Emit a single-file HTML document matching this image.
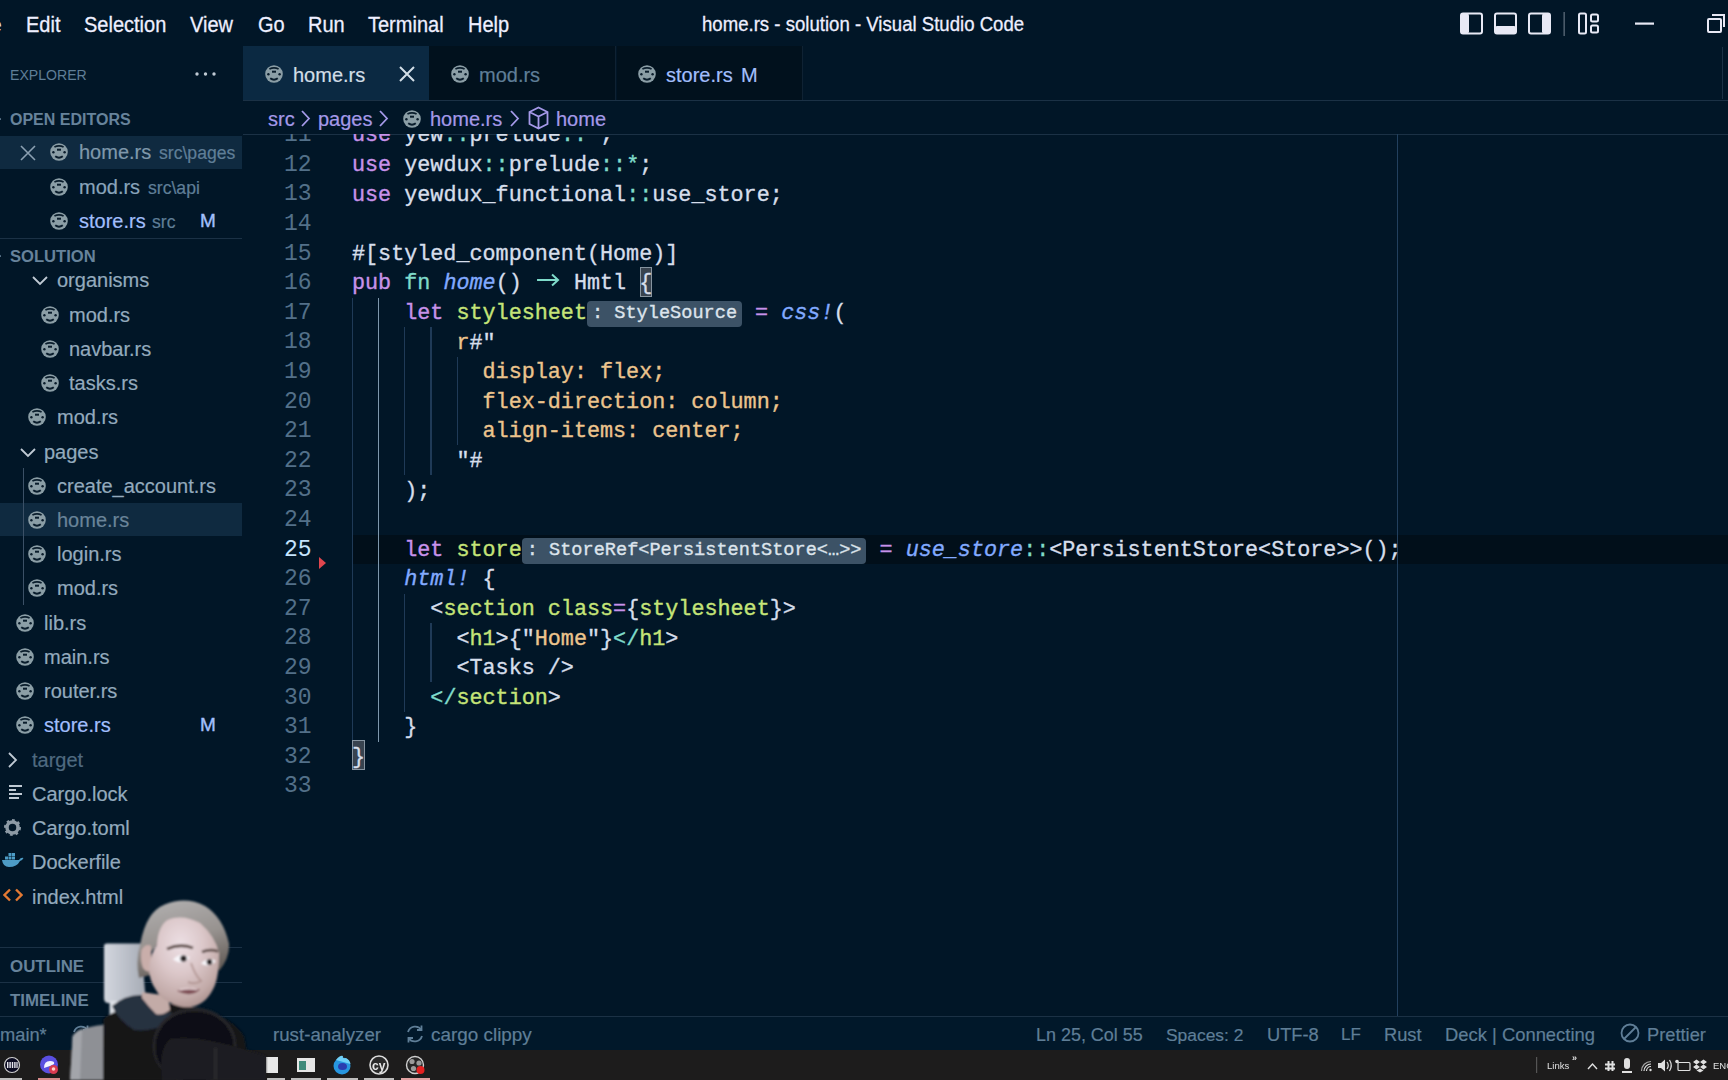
<!DOCTYPE html><html><head><meta charset="utf-8"><style>
*{box-sizing:border-box;margin:0;padding:0}
html,body{width:1728px;height:1080px;overflow:hidden;background:#011627}
body{position:relative;font-family:"Liberation Sans",sans-serif;color:#89a4bb}
.a{position:absolute;white-space:pre}
.menu{font-size:20px;color:#eeefff;line-height:24px;-webkit-text-stroke:0.25px currentColor}
.sb{font-size:20px;line-height:24px;color:#93aabd;-webkit-text-stroke:0.2px currentColor}
.hd{font-size:16px;font-weight:bold;color:#67839b;line-height:20px}
.code{position:absolute;-webkit-text-stroke:0.35px currentColor;left:352.0px;font-family:"Liberation Mono",monospace;font-size:21.767px;line-height:29.6px;color:#d6deeb;white-space:pre}
.ln{position:absolute;left:250px;width:61.5px;font-family:"Liberation Mono",monospace;font-size:23px;line-height:29.6px;color:#4b6479;text-align:right}
.k{color:#c792ea}.v{color:#c5e478}.s{color:#ecc48d}.f{color:#82aaff;font-style:italic}.p{color:#7fdbca}.w{color:#d6deeb}
.hint{display:inline-block;background:#3c5266;color:#dce4ec;border-radius:4px;font-size:18.6px;line-height:26px;padding:0 5px;vertical-align:top;margin-top:2.5px}
.st{font-size:18.3px;line-height:22px;color:#5f7e97;-webkit-text-stroke:0.2px currentColor}
.g{position:absolute;width:1.3px;background:#1f3550}
.ic{position:absolute}
</style></head><body>
<div class="a menu" style="left:-9.5px;top:13px;">e</div>
<div class="a menu" style="left:26px;top:13px;transform:scaleY(1.07);transform-origin:0 19px">Edit</div>
<div class="a menu" style="left:84px;top:13px;transform:scaleY(1.07);transform-origin:0 19px">Selection</div>
<div class="a menu" style="left:190px;top:13px;transform:scaleY(1.07);transform-origin:0 19px">View</div>
<div class="a menu" style="left:258px;top:13px;transform:scaleY(1.07);transform-origin:0 19px">Go</div>
<div class="a menu" style="left:308px;top:13px;transform:scaleY(1.07);transform-origin:0 19px">Run</div>
<div class="a menu" style="left:368px;top:13px;transform:scaleY(1.07);transform-origin:0 19px">Terminal</div>
<div class="a menu" style="left:468px;top:13px;transform:scaleY(1.07);transform-origin:0 19px">Help</div>
<div class="a menu" style="left:702px;top:12.5px;font-size:18.6px;transform:scaleY(1.1);transform-origin:0 19px">home.rs - solution - Visual Studio Code</div>
<svg class="ic" style="left:1455px;top:8px" width="273" height="32" viewBox="1455 8 273 32">
<g fill="none" stroke="#e8e9f5" stroke-width="2">
<rect x="1461" y="13.5" width="21" height="20" rx="2"/>
<rect x="1495" y="13.5" width="21" height="20" rx="2"/>
<rect x="1529" y="13.5" width="21" height="20" rx="2"/>
<rect x="1579" y="13.5" width="7" height="20" rx="1.5"/>
<rect x="1591" y="14.5" width="7" height="7" rx="1.5"/>
<rect x="1591" y="25.5" width="7" height="7" rx="1.5"/>
<rect x="1708" y="19" width="13" height="13" rx="1"/>
<path d="M1712 15 h12 v12"/>
</g>
<g fill="#e8e9f5">
<rect x="1461" y="13.5" width="8" height="20" rx="2"/>
<rect x="1495" y="26" width="21" height="7.5" rx="2"/>
<rect x="1542" y="13.5" width="8" height="20" rx="2"/>
<rect x="1563.5" y="12" width="1.3" height="24" fill="#5d6b7a"/>
<rect x="1635" y="22.5" width="19" height="2.2"/>
</g></svg>
<div class="a" style="left:243px;top:46px;width:186px;height:54px;background:#0b2942"></div>
<div class="a" style="left:429px;top:46px;width:186px;height:54px;background:#01111d"></div>
<div class="a" style="left:615px;top:46px;width:1.3px;height:54px;background:#0f2233"></div>
<div class="a" style="left:616.5px;top:46px;width:185.5px;height:54px;background:#01111d"></div>
<div class="a" style="left:801.5px;top:46px;width:1.3px;height:54px;background:#0f2233"></div>
<div class="a" style="left:243px;top:99.5px;width:1485px;height:1.3px;background:#1b3145"></div>
<div class="a" style="left:1722px;top:47px;width:1.3px;height:52px;background:#1b3145"></div>
<div class="a sb" style="left:293px;top:63px;color:#d2dee7">home.rs</div>
<div class="a sb" style="left:479px;top:63px;color:#5f7e97">mod.rs</div>
<div class="a sb" style="left:666px;top:63px;color:#a2bffc">store.rs</div>
<div class="a sb" style="left:741px;top:63px;color:#a2bffc">M</div>
<svg class="ic" style="left:398px;top:65px" width="18" height="18" viewBox="0 0 18 18"><path d="M2 2 L16 16 M16 2 L2 16" stroke="#d2dee7" stroke-width="2"/></svg>
<svg class="ic" style="left:264px;top:64px" width="20" height="20" viewBox="-10 -10 20 20">
<circle r="8.8" fill="#8b9ea6"/>
<path d="M-4.6 -5 Q0 -7.4 4.6 -5" fill="none" stroke="#0a1d2c" stroke-width="1.7"/>
<circle cx="-5.6" cy="0.3" r="1.2" fill="#0a1d2c"/><circle cx="5.6" cy="0.3" r="1.2" fill="#0a1d2c"/>
<rect x="-2" y="-3.3" width="4" height="2" fill="#0a1d2c"/>
<path d="M-3.8 4.3 Q0 7 3.8 4.3" fill="none" stroke="#0a1d2c" stroke-width="2"/>
</svg>
<svg class="ic" style="left:450px;top:64px" width="20" height="20" viewBox="-10 -10 20 20">
<circle r="8.8" fill="#8b9ea6"/>
<path d="M-4.6 -5 Q0 -7.4 4.6 -5" fill="none" stroke="#0a1d2c" stroke-width="1.7"/>
<circle cx="-5.6" cy="0.3" r="1.2" fill="#0a1d2c"/><circle cx="5.6" cy="0.3" r="1.2" fill="#0a1d2c"/>
<rect x="-2" y="-3.3" width="4" height="2" fill="#0a1d2c"/>
<path d="M-3.8 4.3 Q0 7 3.8 4.3" fill="none" stroke="#0a1d2c" stroke-width="2"/>
</svg>
<svg class="ic" style="left:637px;top:64px" width="20" height="20" viewBox="-10 -10 20 20">
<circle r="8.8" fill="#8b9ea6"/>
<path d="M-4.6 -5 Q0 -7.4 4.6 -5" fill="none" stroke="#0a1d2c" stroke-width="1.7"/>
<circle cx="-5.6" cy="0.3" r="1.2" fill="#0a1d2c"/><circle cx="5.6" cy="0.3" r="1.2" fill="#0a1d2c"/>
<rect x="-2" y="-3.3" width="4" height="2" fill="#0a1d2c"/>
<path d="M-3.8 4.3 Q0 7 3.8 4.3" fill="none" stroke="#0a1d2c" stroke-width="2"/>
</svg>
<div class="a sb" style="left:268px;top:107px;color:#a599e9">src</div>
<div class="a sb" style="left:318px;top:107px;color:#a599e9">pages</div>
<div class="a sb" style="left:430px;top:107px;color:#a599e9">home.rs</div>
<div class="a sb" style="left:556px;top:107px;color:#a599e9">home</div>
<svg class="ic" style="left:295px;top:106px" width="340" height="26" viewBox="295 106 340 26"><g fill="none" stroke="#a599e9" stroke-width="1.8">
<path d="M302 111 L309 118.5 L302 126"/><path d="M380 111 L387 118.5 L380 126"/><path d="M511 111 L518 118.5 L511 126"/>
<path d="M538.5 107.5 L547.5 112 L547.5 124 L538.5 128.5 L529.5 124 L529.5 112 Z M529.5 112 L538.5 116.5 L547.5 112 M538.5 116.5 V128.5"/>
</g></svg>
<svg class="ic" style="left:402px;top:109px" width="20" height="20" viewBox="-10 -10 20 20">
<circle r="8.8" fill="#8b9ea6"/>
<path d="M-4.6 -5 Q0 -7.4 4.6 -5" fill="none" stroke="#0a1d2c" stroke-width="1.7"/>
<circle cx="-5.6" cy="0.3" r="1.2" fill="#0a1d2c"/><circle cx="5.6" cy="0.3" r="1.2" fill="#0a1d2c"/>
<rect x="-2" y="-3.3" width="4" height="2" fill="#0a1d2c"/>
<path d="M-3.8 4.3 Q0 7 3.8 4.3" fill="none" stroke="#0a1d2c" stroke-width="2"/>
</svg>
<div class="a" style="left:243px;top:133.5px;width:1485px;height:1.3px;background:#1b3145"></div>
<div class="a" style="left:353px;top:534.80px;width:1375px;height:29.60px;background:#010f1a"></div>
<div class="a" style="left:1396.5px;top:134px;width:1.5px;height:882px;background:#22405e"></div>
<div class="g" style="left:352.0px;top:297.5px;height:444.0px;background:#1f3a57"></div>
<div class="g" style="left:378.1px;top:297.5px;height:444.0px;background:#7e97ac"></div>
<div class="g" style="left:404.2px;top:327.1px;height:148.0px;background:#1f3a57"></div>
<div class="g" style="left:430.4px;top:327.1px;height:148.0px;background:#1f3a57"></div>
<div class="g" style="left:456.5px;top:356.7px;height:88.8px;background:#1f3a57"></div>
<div class="g" style="left:404.2px;top:593.5px;height:118.4px;background:#1f3a57"></div>
<div class="g" style="left:430.4px;top:623.1px;height:59.2px;background:#1f3a57"></div>
<div class="a" style="left:639.7px;top:266.6px;width:12.4px;height:30px;border:1.5px solid #8694a0;background:#38434f"></div>
<div class="a" style="left:352.4px;top:740.2px;width:12.4px;height:30px;border:1.5px solid #8694a0;background:#38434f"></div>
<div class="code" style="top:121.36px"><span class="k">use</span> yew<span class="p">::</span>prelude<span class="p">::</span><span class="p">*</span>;</div>
<div class="ln" style="top:121.16px;color:#537089">11</div>
<div class="code" style="top:150.96px"><span class="k">use</span> yewdux<span class="p">::</span>prelude<span class="p">::</span><span class="p">*</span>;</div>
<div class="ln" style="top:150.76px;color:#537089">12</div>
<div class="code" style="top:180.56px"><span class="k">use</span> yewdux_functional<span class="p">::</span>use_store;</div>
<div class="ln" style="top:180.36px;color:#537089">13</div>
<div class="code" style="top:210.16px"></div>
<div class="ln" style="top:209.96px;color:#537089">14</div>
<div class="code" style="top:239.76px">#[styled_component(Home)]</div>
<div class="ln" style="top:239.56px;color:#537089">15</div>
<div class="code" style="top:269.36px"><span class="k">pub</span> <span class="p">fn</span> <span class="f">home</span>() <span style="display:inline-block;width:26.12px;height:10px;position:relative"><svg style="position:absolute;left:0;top:-6px" width="26.1" height="14" viewBox="0 0 26 14"><path d="M2 7 H23 M17 1.5 L23 7 L17 12.5" fill="none" stroke="#7fdbca" stroke-width="2"/></svg></span> Hmtl {</div>
<div class="ln" style="top:269.16px;color:#537089">16</div>
<div class="code" style="top:298.96px">    <span class="k">let</span> <span class="v">stylesheet</span><span class="hint">: StyleSource</span> <span class="k">=</span> <span class="f">css!</span>(</div>
<div class="ln" style="top:298.76px;color:#537089">17</div>
<div class="code" style="top:328.56px">        <span class="s">r</span>#"</div>
<div class="ln" style="top:328.36px;color:#537089">18</div>
<div class="code" style="top:358.16px">          <span class="s">display: flex;</span></div>
<div class="ln" style="top:357.96px;color:#537089">19</div>
<div class="code" style="top:387.76px">          <span class="s">flex-direction: column;</span></div>
<div class="ln" style="top:387.56px;color:#537089">20</div>
<div class="code" style="top:417.36px">          <span class="s">align-items: center;</span></div>
<div class="ln" style="top:417.16px;color:#537089">21</div>
<div class="code" style="top:446.96px">        "#</div>
<div class="ln" style="top:446.76px;color:#537089">22</div>
<div class="code" style="top:476.56px">    );</div>
<div class="ln" style="top:476.36px;color:#537089">23</div>
<div class="code" style="top:506.16px"></div>
<div class="ln" style="top:505.96px;color:#537089">24</div>
<div class="code" style="top:535.76px">    <span class="k">let</span> <span class="v">store</span><span class="hint">: StoreRef&lt;PersistentStore&lt;…&gt;&gt;</span> <span class="k">=</span> <span class="f">use_store</span><span class="p">::</span>&lt;PersistentStore&lt;Store&gt;&gt;();</div>
<div class="ln" style="top:535.56px;color:#c5e4fd">25</div>
<div class="code" style="top:565.36px">    <span class="f">html!</span> {</div>
<div class="ln" style="top:565.16px;color:#537089">26</div>
<div class="code" style="top:594.96px">      &lt;<span class="v">section</span> <span class="v">class</span><span class="k">=</span>{<span class="v">stylesheet</span>}&gt;</div>
<div class="ln" style="top:594.76px;color:#537089">27</div>
<div class="code" style="top:624.56px">        &lt;<span class="v">h1</span>&gt;{"<span class="s">Home</span>"}<span class="p">&lt;/</span><span class="v">h1</span>&gt;</div>
<div class="ln" style="top:624.36px;color:#537089">28</div>
<div class="code" style="top:654.16px">        &lt;Tasks /&gt;</div>
<div class="ln" style="top:653.96px;color:#537089">29</div>
<div class="code" style="top:683.76px">      <span class="p">&lt;/</span><span class="v">section</span>&gt;</div>
<div class="ln" style="top:683.56px;color:#537089">30</div>
<div class="code" style="top:713.36px">    }</div>
<div class="ln" style="top:713.16px;color:#537089">31</div>
<div class="code" style="top:742.96px">}</div>
<div class="ln" style="top:742.76px;color:#537089">32</div>
<div class="code" style="top:772.56px"></div>
<div class="ln" style="top:772.36px;color:#537089">33</div>
<svg class="ic" style="left:318px;top:556px" width="10" height="14" viewBox="0 0 10 14"><path d="M1 1 L8 7 L1 13 Z" fill="#e0464e"/></svg>
<div class="a" style="left:243px;top:101px;width:1485px;height:32.5px;background:#011627"></div>
<div class="a sb" style="left:268px;top:107px;color:#a599e9">src</div>
<div class="a sb" style="left:318px;top:107px;color:#a599e9">pages</div>
<div class="a sb" style="left:430px;top:107px;color:#a599e9">home.rs</div>
<div class="a sb" style="left:556px;top:107px;color:#a599e9">home</div>
<svg class="ic" style="left:295px;top:106px" width="340" height="26" viewBox="295 106 340 26"><g fill="none" stroke="#a599e9" stroke-width="1.8">
<path d="M302 111 L309 118.5 L302 126"/><path d="M380 111 L387 118.5 L380 126"/><path d="M511 111 L518 118.5 L511 126"/>
<path d="M538.5 107.5 L547.5 112 L547.5 124 L538.5 128.5 L529.5 124 L529.5 112 Z M529.5 112 L538.5 116.5 L547.5 112 M538.5 116.5 V128.5"/>
</g></svg>
<svg class="ic" style="left:402px;top:109px" width="20" height="20" viewBox="-10 -10 20 20">
<circle r="8.8" fill="#8b9ea6"/>
<path d="M-4.6 -5 Q0 -7.4 4.6 -5" fill="none" stroke="#0a1d2c" stroke-width="1.7"/>
<circle cx="-5.6" cy="0.3" r="1.2" fill="#0a1d2c"/><circle cx="5.6" cy="0.3" r="1.2" fill="#0a1d2c"/>
<rect x="-2" y="-3.3" width="4" height="2" fill="#0a1d2c"/>
<path d="M-3.8 4.3 Q0 7 3.8 4.3" fill="none" stroke="#0a1d2c" stroke-width="2"/>
</svg>
<div class="a " style="left:10px;top:66px;font-size:14.1px;color:#5f7e97;line-height:18px">EXPLORER</div>
<svg class="ic" style="left:194px;top:70px" width="24" height="8" viewBox="0 0 24 8"><g fill="#c0cad4"><circle cx="3" cy="4" r="1.7"/><circle cx="11.5" cy="4" r="1.7"/><circle cx="20" cy="4" r="1.7"/></g></svg>
<div class="a hd" style="left:10px;top:109.5px;">OPEN EDITORS</div>
<svg class="ic" style="left:-4px;top:113px" width="8" height="10" viewBox="0 0 8 10"><path d="M0 1 L4 6 L0 9" fill="none" stroke="#89a4bb" stroke-width="1.5"/></svg>
<div class="a" style="left:0;top:135.5px;width:241.5px;height:33.5px;background:#0f2a40"></div>
<svg class="ic" style="left:19px;top:145px" width="18" height="16" viewBox="0 0 18 16"><path d="M2 1 L16 15 M16 1 L2 15" stroke="#8ba0b2" stroke-width="1.6"/></svg>
<svg class="ic" style="left:49px;top:142px" width="20" height="20" viewBox="-10 -10 20 20">
<circle r="8.8" fill="#8b9ea6"/>
<path d="M-4.6 -5 Q0 -7.4 4.6 -5" fill="none" stroke="#0a1d2c" stroke-width="1.7"/>
<circle cx="-5.6" cy="0.3" r="1.2" fill="#0a1d2c"/><circle cx="5.6" cy="0.3" r="1.2" fill="#0a1d2c"/>
<rect x="-2" y="-3.3" width="4" height="2" fill="#0a1d2c"/>
<path d="M-3.8 4.3 Q0 7 3.8 4.3" fill="none" stroke="#0a1d2c" stroke-width="2"/>
</svg>
<div class="a sb" style="left:79px;top:140px;color:#7f98ab">home.rs</div>
<div class="a sb" style="left:159px;top:141px;font-size:17.6px;color:#5f7e97">src\pages</div>
<svg class="ic" style="left:49px;top:177px" width="20" height="20" viewBox="-10 -10 20 20">
<circle r="8.8" fill="#8b9ea6"/>
<path d="M-4.6 -5 Q0 -7.4 4.6 -5" fill="none" stroke="#0a1d2c" stroke-width="1.7"/>
<circle cx="-5.6" cy="0.3" r="1.2" fill="#0a1d2c"/><circle cx="5.6" cy="0.3" r="1.2" fill="#0a1d2c"/>
<rect x="-2" y="-3.3" width="4" height="2" fill="#0a1d2c"/>
<path d="M-3.8 4.3 Q0 7 3.8 4.3" fill="none" stroke="#0a1d2c" stroke-width="2"/>
</svg>
<div class="a sb" style="left:79px;top:175px;color:#89a4bb">mod.rs</div>
<div class="a sb" style="left:148px;top:176px;font-size:17.6px;color:#5f7e97">src\api</div>
<svg class="ic" style="left:49px;top:211px" width="20" height="20" viewBox="-10 -10 20 20">
<circle r="8.8" fill="#8b9ea6"/>
<path d="M-4.6 -5 Q0 -7.4 4.6 -5" fill="none" stroke="#0a1d2c" stroke-width="1.7"/>
<circle cx="-5.6" cy="0.3" r="1.2" fill="#0a1d2c"/><circle cx="5.6" cy="0.3" r="1.2" fill="#0a1d2c"/>
<rect x="-2" y="-3.3" width="4" height="2" fill="#0a1d2c"/>
<path d="M-3.8 4.3 Q0 7 3.8 4.3" fill="none" stroke="#0a1d2c" stroke-width="2"/>
</svg>
<div class="a sb" style="left:79px;top:209px;color:#a2bffc">store.rs</div>
<div class="a sb" style="left:152px;top:210px;font-size:17.6px;color:#5f7e97">src</div>
<div class="a sb" style="left:200px;top:209px;font-size:19px;color:#a2bffc;-webkit-text-stroke:0.4px #a2bffc">M</div>
<div class="a" style="left:0;top:238px;width:241.5px;height:1.3px;background:#1b3145"></div>
<div class="a hd" style="left:10px;top:246.5px;font-size:16.6px">SOLUTION</div>
<svg class="ic" style="left:-4px;top:250px" width="8" height="10" viewBox="0 0 8 10"><path d="M0 1 L4 6 L0 9" fill="none" stroke="#89a4bb" stroke-width="1.5"/></svg>
<div class="a" style="left:0;top:503.0px;width:241.5px;height:33.3px;background:#0f2a40"></div>
<div class="a" style="left:23px;top:468px;width:1.3px;height:137px;background:#3b5066"></div>
<svg class="ic" style="left:31px;top:275.4px" width="18" height="12" viewBox="0 0 18 12"><path d="M2 2 L9 9 L16 2" fill="none" stroke="#c0cad4" stroke-width="1.8"/></svg>
<div class="a sb" style="left:57px;top:268.4px;">organisms</div>
<svg class="ic" style="left:40px;top:305px" width="20" height="20" viewBox="-10 -10 20 20">
<circle r="8.8" fill="#8b9ea6"/>
<path d="M-4.6 -5 Q0 -7.4 4.6 -5" fill="none" stroke="#0a1d2c" stroke-width="1.7"/>
<circle cx="-5.6" cy="0.3" r="1.2" fill="#0a1d2c"/><circle cx="5.6" cy="0.3" r="1.2" fill="#0a1d2c"/>
<rect x="-2" y="-3.3" width="4" height="2" fill="#0a1d2c"/>
<path d="M-3.8 4.3 Q0 7 3.8 4.3" fill="none" stroke="#0a1d2c" stroke-width="2"/>
</svg>
<div class="a sb" style="left:69px;top:302.63px;">mod.rs</div>
<svg class="ic" style="left:40px;top:339px" width="20" height="20" viewBox="-10 -10 20 20">
<circle r="8.8" fill="#8b9ea6"/>
<path d="M-4.6 -5 Q0 -7.4 4.6 -5" fill="none" stroke="#0a1d2c" stroke-width="1.7"/>
<circle cx="-5.6" cy="0.3" r="1.2" fill="#0a1d2c"/><circle cx="5.6" cy="0.3" r="1.2" fill="#0a1d2c"/>
<rect x="-2" y="-3.3" width="4" height="2" fill="#0a1d2c"/>
<path d="M-3.8 4.3 Q0 7 3.8 4.3" fill="none" stroke="#0a1d2c" stroke-width="2"/>
</svg>
<div class="a sb" style="left:69px;top:336.85999999999996px;">navbar.rs</div>
<svg class="ic" style="left:40px;top:373px" width="20" height="20" viewBox="-10 -10 20 20">
<circle r="8.8" fill="#8b9ea6"/>
<path d="M-4.6 -5 Q0 -7.4 4.6 -5" fill="none" stroke="#0a1d2c" stroke-width="1.7"/>
<circle cx="-5.6" cy="0.3" r="1.2" fill="#0a1d2c"/><circle cx="5.6" cy="0.3" r="1.2" fill="#0a1d2c"/>
<rect x="-2" y="-3.3" width="4" height="2" fill="#0a1d2c"/>
<path d="M-3.8 4.3 Q0 7 3.8 4.3" fill="none" stroke="#0a1d2c" stroke-width="2"/>
</svg>
<div class="a sb" style="left:69px;top:371.09px;">tasks.rs</div>
<svg class="ic" style="left:27px;top:407px" width="20" height="20" viewBox="-10 -10 20 20">
<circle r="8.8" fill="#8b9ea6"/>
<path d="M-4.6 -5 Q0 -7.4 4.6 -5" fill="none" stroke="#0a1d2c" stroke-width="1.7"/>
<circle cx="-5.6" cy="0.3" r="1.2" fill="#0a1d2c"/><circle cx="5.6" cy="0.3" r="1.2" fill="#0a1d2c"/>
<rect x="-2" y="-3.3" width="4" height="2" fill="#0a1d2c"/>
<path d="M-3.8 4.3 Q0 7 3.8 4.3" fill="none" stroke="#0a1d2c" stroke-width="2"/>
</svg>
<div class="a sb" style="left:57px;top:405.31999999999994px;">mod.rs</div>
<svg class="ic" style="left:19px;top:446.54999999999995px" width="18" height="12" viewBox="0 0 18 12"><path d="M2 2 L9 9 L16 2" fill="none" stroke="#c0cad4" stroke-width="1.8"/></svg>
<div class="a sb" style="left:44px;top:439.54999999999995px;">pages</div>
<svg class="ic" style="left:27px;top:476px" width="20" height="20" viewBox="-10 -10 20 20">
<circle r="8.8" fill="#8b9ea6"/>
<path d="M-4.6 -5 Q0 -7.4 4.6 -5" fill="none" stroke="#0a1d2c" stroke-width="1.7"/>
<circle cx="-5.6" cy="0.3" r="1.2" fill="#0a1d2c"/><circle cx="5.6" cy="0.3" r="1.2" fill="#0a1d2c"/>
<rect x="-2" y="-3.3" width="4" height="2" fill="#0a1d2c"/>
<path d="M-3.8 4.3 Q0 7 3.8 4.3" fill="none" stroke="#0a1d2c" stroke-width="2"/>
</svg>
<div class="a sb" style="left:57px;top:473.78px;">create_account.rs</div>
<svg class="ic" style="left:27px;top:510px" width="20" height="20" viewBox="-10 -10 20 20">
<circle r="8.8" fill="#8b9ea6"/>
<path d="M-4.6 -5 Q0 -7.4 4.6 -5" fill="none" stroke="#0a1d2c" stroke-width="1.7"/>
<circle cx="-5.6" cy="0.3" r="1.2" fill="#0a1d2c"/><circle cx="5.6" cy="0.3" r="1.2" fill="#0a1d2c"/>
<rect x="-2" y="-3.3" width="4" height="2" fill="#0a1d2c"/>
<path d="M-3.8 4.3 Q0 7 3.8 4.3" fill="none" stroke="#0a1d2c" stroke-width="2"/>
</svg>
<div class="a sb" style="left:57px;top:508.01px;color:#6a8499">home.rs</div>
<svg class="ic" style="left:27px;top:544px" width="20" height="20" viewBox="-10 -10 20 20">
<circle r="8.8" fill="#8b9ea6"/>
<path d="M-4.6 -5 Q0 -7.4 4.6 -5" fill="none" stroke="#0a1d2c" stroke-width="1.7"/>
<circle cx="-5.6" cy="0.3" r="1.2" fill="#0a1d2c"/><circle cx="5.6" cy="0.3" r="1.2" fill="#0a1d2c"/>
<rect x="-2" y="-3.3" width="4" height="2" fill="#0a1d2c"/>
<path d="M-3.8 4.3 Q0 7 3.8 4.3" fill="none" stroke="#0a1d2c" stroke-width="2"/>
</svg>
<div class="a sb" style="left:57px;top:542.24px;">login.rs</div>
<svg class="ic" style="left:27px;top:578px" width="20" height="20" viewBox="-10 -10 20 20">
<circle r="8.8" fill="#8b9ea6"/>
<path d="M-4.6 -5 Q0 -7.4 4.6 -5" fill="none" stroke="#0a1d2c" stroke-width="1.7"/>
<circle cx="-5.6" cy="0.3" r="1.2" fill="#0a1d2c"/><circle cx="5.6" cy="0.3" r="1.2" fill="#0a1d2c"/>
<rect x="-2" y="-3.3" width="4" height="2" fill="#0a1d2c"/>
<path d="M-3.8 4.3 Q0 7 3.8 4.3" fill="none" stroke="#0a1d2c" stroke-width="2"/>
</svg>
<div class="a sb" style="left:57px;top:576.47px;">mod.rs</div>
<svg class="ic" style="left:15px;top:613px" width="20" height="20" viewBox="-10 -10 20 20">
<circle r="8.8" fill="#8b9ea6"/>
<path d="M-4.6 -5 Q0 -7.4 4.6 -5" fill="none" stroke="#0a1d2c" stroke-width="1.7"/>
<circle cx="-5.6" cy="0.3" r="1.2" fill="#0a1d2c"/><circle cx="5.6" cy="0.3" r="1.2" fill="#0a1d2c"/>
<rect x="-2" y="-3.3" width="4" height="2" fill="#0a1d2c"/>
<path d="M-3.8 4.3 Q0 7 3.8 4.3" fill="none" stroke="#0a1d2c" stroke-width="2"/>
</svg>
<div class="a sb" style="left:44px;top:610.6999999999999px;">lib.rs</div>
<svg class="ic" style="left:15px;top:647px" width="20" height="20" viewBox="-10 -10 20 20">
<circle r="8.8" fill="#8b9ea6"/>
<path d="M-4.6 -5 Q0 -7.4 4.6 -5" fill="none" stroke="#0a1d2c" stroke-width="1.7"/>
<circle cx="-5.6" cy="0.3" r="1.2" fill="#0a1d2c"/><circle cx="5.6" cy="0.3" r="1.2" fill="#0a1d2c"/>
<rect x="-2" y="-3.3" width="4" height="2" fill="#0a1d2c"/>
<path d="M-3.8 4.3 Q0 7 3.8 4.3" fill="none" stroke="#0a1d2c" stroke-width="2"/>
</svg>
<div class="a sb" style="left:44px;top:644.93px;">main.rs</div>
<svg class="ic" style="left:15px;top:681px" width="20" height="20" viewBox="-10 -10 20 20">
<circle r="8.8" fill="#8b9ea6"/>
<path d="M-4.6 -5 Q0 -7.4 4.6 -5" fill="none" stroke="#0a1d2c" stroke-width="1.7"/>
<circle cx="-5.6" cy="0.3" r="1.2" fill="#0a1d2c"/><circle cx="5.6" cy="0.3" r="1.2" fill="#0a1d2c"/>
<rect x="-2" y="-3.3" width="4" height="2" fill="#0a1d2c"/>
<path d="M-3.8 4.3 Q0 7 3.8 4.3" fill="none" stroke="#0a1d2c" stroke-width="2"/>
</svg>
<div class="a sb" style="left:44px;top:679.16px;">router.rs</div>
<svg class="ic" style="left:15px;top:715px" width="20" height="20" viewBox="-10 -10 20 20">
<circle r="8.8" fill="#8b9ea6"/>
<path d="M-4.6 -5 Q0 -7.4 4.6 -5" fill="none" stroke="#0a1d2c" stroke-width="1.7"/>
<circle cx="-5.6" cy="0.3" r="1.2" fill="#0a1d2c"/><circle cx="5.6" cy="0.3" r="1.2" fill="#0a1d2c"/>
<rect x="-2" y="-3.3" width="4" height="2" fill="#0a1d2c"/>
<path d="M-3.8 4.3 Q0 7 3.8 4.3" fill="none" stroke="#0a1d2c" stroke-width="2"/>
</svg>
<div class="a sb" style="left:44px;top:713.3899999999999px;color:#a2bffc">store.rs</div>
<svg class="ic" style="left:7px;top:750.6199999999999px" width="12" height="18" viewBox="0 0 12 18"><path d="M2 2 L9 9 L2 16" fill="none" stroke="#c0cad4" stroke-width="1.8"/></svg>
<div class="a sb" style="left:32px;top:747.6199999999999px;color:#4f6a80">target</div>
<svg class="ic" style="left:8px;top:784px" width="16" height="16" viewBox="0 0 16 16"><g stroke="#c0cad4" stroke-width="2"><path d="M1 2 H14 M1 6 H8 M1 10 H14 M1 14 H11"/></g></svg>
<div class="a sb" style="left:32px;top:781.8499999999999px;">Cargo.lock</div>
<svg class="ic" style="left:3px;top:818px" width="19" height="19" viewBox="-9.5 -9.5 19 19"><circle r="5.5" fill="none" stroke="#8d9aa5" stroke-width="3.5"/><circle r="7" fill="none" stroke="#8d9aa5" stroke-width="3" stroke-dasharray="2.5 2.9"/></svg>
<div class="a sb" style="left:32px;top:816.0799999999999px;">Cargo.toml</div>
<svg class="ic" style="left:2px;top:852px" width="22" height="16" viewBox="0 0 22 16"><path d="M0 8 H17 Q19 5 21.5 6 Q20 9 18 9 Q15 15 7 15 Q1 15 0 8 Z" fill="#4d9cc6"/><g fill="#4d9cc6"><rect x="3" y="4.5" width="3" height="3"/><rect x="6.5" y="4.5" width="3" height="3"/><rect x="10" y="4.5" width="3" height="3"/><rect x="6.5" y="1" width="3" height="3"/><rect x="10" y="1" width="3" height="3"/></g></svg>
<div class="a sb" style="left:32px;top:850.31px;">Dockerfile</div>
<svg class="ic" style="left:3px;top:888px" width="20" height="14" viewBox="0 0 20 14"><path d="M7 1.5 L1.5 7 L7 12.5 M13 1.5 L18.5 7 L13 12.5" fill="none" stroke="#e37933" stroke-width="2.4"/></svg>
<div class="a sb" style="left:32px;top:884.54px;">index.html</div>
<div class="a sb" style="left:200px;top:713.3899999999999px;font-size:19px;color:#a2bffc;-webkit-text-stroke:0.4px #a2bffc">M</div>
<div class="a" style="left:0;top:947px;width:241.5px;height:1.3px;background:#1b3145"></div>
<div class="a" style="left:0;top:981.5px;width:241.5px;height:1.3px;background:#1b3145"></div>
<div class="a hd" style="left:10px;top:956.5px;font-size:16.9px">OUTLINE</div>
<div class="a hd" style="left:10px;top:990.5px;font-size:16.9px">TIMELINE</div>
<div class="a" style="left:0;top:1016px;width:1728px;height:34px;background:#01182a"></div>
<div class="a" style="left:0;top:1016px;width:1728px;height:1.3px;background:#1b3145"></div>
<div class="a st" style="left:0px;top:1024px;font-size:18.3px">main*</div>
<div class="a st" style="left:273px;top:1024px;font-size:18.7px">rust-analyzer</div>
<div class="a st" style="left:431px;top:1024px;font-size:18.9px">cargo clippy</div>
<div class="a st" style="left:1036px;top:1024px;font-size:17.95px">Ln 25, Col 55</div>
<div class="a st" style="left:1166px;top:1024px;font-size:17.4px">Spaces: 2</div>
<div class="a st" style="left:1267px;top:1024px;font-size:18.3px">UTF-8</div>
<div class="a st" style="left:1341px;top:1024px;font-size:17px">LF</div>
<div class="a st" style="left:1384px;top:1024px;font-size:18.3px">Rust</div>
<div class="a st" style="left:1445px;top:1024px;font-size:18.4px">Deck | Connecting</div>
<div class="a st" style="left:1647px;top:1024px;font-size:18.3px">Prettier</div>
<svg class="ic" style="left:404px;top:1023px" width="22" height="22" viewBox="0 0 22 22"><g fill="none" stroke="#5f7e97" stroke-width="1.8"><path d="M4 9 A7.5 7.5 0 0 1 17.5 7"/><path d="M18 13 A7.5 7.5 0 0 1 4.5 15"/><path d="M17.5 2.5 V7 H13"/><path d="M4.5 19.5 V15 H9"/></g></svg>
<svg class="ic" style="left:70px;top:1023px" width="22" height="22" viewBox="0 0 22 22"><g fill="none" stroke="#5f7e97" stroke-width="1.8"><path d="M4 9 A7.5 7.5 0 0 1 17.5 7"/><path d="M18 13 A7.5 7.5 0 0 1 4.5 15"/><path d="M17.5 2.5 V7 H13"/><path d="M4.5 19.5 V15 H9"/></g></svg>
<svg class="ic" style="left:1619px;top:1022px" width="22" height="22" viewBox="0 0 22 22"><g fill="none" stroke="#5f7e97" stroke-width="1.8"><circle cx="11" cy="11" r="8.5"/><path d="M5 17 L17 5"/></g></svg>
<div class="a" style="left:0;top:1050px;width:1728px;height:30px;background:#1d1c1c"></div>
<svg class="ic" style="left:0;top:1050px" width="1728" height="30" viewBox="0 1050 1728 30">
<circle cx="12" cy="1065" r="7.5" fill="#0b0b22" stroke="#cfcfcf" stroke-width="1.2"/>
<g fill="#e8e8f0"><rect x="7" y="1062" width="1.4" height="6"/><rect x="9.4" y="1062" width="1.4" height="6"/><rect x="11.8" y="1062" width="1.4" height="6"/><rect x="14.2" y="1062" width="1.4" height="6"/><rect x="16.4" y="1062" width="1.2" height="6"/></g>
<circle cx="49" cy="1064.5" r="9" fill="#5a4fe0"/><path d="M44 1068 Q44 1061 50 1061 Q55 1061 54 1064 L50 1066 Z" fill="#f4f4ff"/><circle cx="53.5" cy="1069.5" r="4.5" fill="#d83a50"/><circle cx="53.5" cy="1069" r="1.8" fill="#ffd0c8"/>
<rect x="266" y="1057" width="12" height="16" fill="#e8e8e8"/>
<rect x="297" y="1058" width="18" height="14" fill="#e6e6e6"/><rect x="299" y="1061" width="7" height="9" fill="#3f8a7a"/>
<circle cx="342" cy="1066" r="8.5" fill="#2796e0"/><path d="M336 1060 Q340 1055 343 1056 Q342 1059 346 1058 Q350 1060 350.5 1064 Z" fill="#6fd0f8"/><ellipse cx="342.5" cy="1066.5" rx="4.5" ry="3.5" fill="#2a3cb0"/>
<circle cx="379" cy="1065" r="9" fill="#2a2a2a" stroke="#dcdcdc" stroke-width="1.6"/><text x="372" y="1069.5" font-family="Liberation Sans" font-size="12" font-weight="bold" fill="#e8e8e8" style="will-change:transform">cy</text>
<circle cx="415" cy="1065" r="8.5" fill="#262626" stroke="#cfcfcf" stroke-width="1.4"/><g fill="#9a9a9a"><circle cx="412" cy="1061.5" r="2.6"/><circle cx="419" cy="1063" r="2.6"/><circle cx="413.5" cy="1068.5" r="2.6"/></g><circle cx="420.5" cy="1070" r="4" fill="#e52020"/>
<g fill="#bdbdbd"><rect x="0" y="1078" width="22" height="2"/><rect x="38" y="1078" width="22" height="2" fill="#d58a8a"/><rect x="267" y="1078" width="18" height="2"/><rect x="291" y="1078" width="30" height="2"/><rect x="327" y="1078" width="31" height="2"/><rect x="364" y="1078" width="30" height="2"/><rect x="401" y="1078" width="29" height="2" fill="#e0a0a0"/></g>
<rect x="1536" y="1057" width="1.2" height="16" fill="#555"/>
<text x="1547" y="1069" font-family="Liberation Sans" font-size="9.5" fill="#e0e0e0">Links</text>
<text x="1572" y="1061" font-family="Liberation Sans" font-size="9" font-weight="bold" fill="#e0e0e0">»</text>
<path d="M1588 1069 L1592.5 1064 L1597 1069" stroke="#e0e0e0" stroke-width="1.4" fill="none"/>
<g fill="#e0e0e0"><rect x="1605" y="1063.5" width="10" height="2"/><rect x="1605" y="1067.5" width="10" height="2"/><rect x="1607.5" y="1061" width="2" height="10"/><rect x="1611.5" y="1061" width="2" height="10"/>
<rect x="1624" y="1058" width="6" height="11" rx="3"/><rect x="1622" y="1071" width="10" height="2"/>
<circle cx="1650.5" cy="1070" r="1.2"/>
</g>
<g fill="none" stroke="#e0e0e0" stroke-width="1.2">
<path d="M1644 1071 A7 7 0 0 1 1651 1064"/><path d="M1641.5 1071 A9.5 9.5 0 0 1 1651 1061.5" opacity="0.7"/><path d="M1646.5 1071 A4.5 4.5 0 0 1 1651 1066.5"/>
<path d="M1667 1062 Q1669.5 1065.5 1667 1069"/><path d="M1669.5 1060 Q1673 1065.5 1669.5 1071"/>
<rect x="1678" y="1062.5" width="12" height="8" rx="1"/>
</g>
<g fill="#e0e0e0">
<path d="M1658 1063 H1661 L1665 1059.5 V1071.5 L1661 1068 H1658 Z"/>
<circle cx="1677" cy="1061.5" r="1.8"/>
<path d="M1695 1062 L1698.5 1059.5 L1702 1062 L1698.5 1064.5 Z M1702 1062 L1705.5 1059.5 L1709 1062 L1705.5 1064.5 Z M1695 1067 L1698.5 1064.5 L1702 1067 L1698.5 1069.5 Z M1702 1067 L1705.5 1064.5 L1709 1067 L1705.5 1069.5 Z M1698.5 1070.5 L1702 1068.5 L1705.5 1070.5 L1702 1072.5 Z" transform="translate(-2,0)"/>
</g>
<text x="1713" y="1069" font-family="Liberation Sans" font-size="9.5" fill="#e0e0e0">ENG</text>
</svg>
<svg class="ic" style="left:60px;top:890px" width="220" height="190" viewBox="60 890 220 190">
<defs>
<filter id="bl" x="-10%" y="-10%" width="120%" height="120%"><feGaussianBlur stdDeviation="0.8"/></filter>
<radialGradient id="face" cx="0.45" cy="0.3" r="0.8"><stop offset="0" stop-color="#ecdfe4"/><stop offset="0.4" stop-color="#dcc8ca"/><stop offset="0.75" stop-color="#c2aaa8"/><stop offset="1" stop-color="#a08682"/></radialGradient>
<linearGradient id="hair" x1="0.3" y1="0" x2="0.6" y2="1"><stop offset="0" stop-color="#b0aeae"/><stop offset="0.5" stop-color="#97928f"/><stop offset="1" stop-color="#5e5752"/></linearGradient>
<linearGradient id="chair" x1="0" y1="0" x2="1" y2="0"><stop offset="0" stop-color="#d3d7df"/><stop offset="1" stop-color="#a6abb5"/></linearGradient>
</defs>
<g filter="url(#bl)">
<path d="M104 946 Q104 943.5 107 943.5 L141 943.5 L146 1003 L107 1003 Q104 1002 104 998 Z" fill="url(#chair)"/>
<rect x="109.6" y="1001" width="7.7" height="13" fill="#dfe2e8"/>
<path d="M70 1080 L72.7 1036 Q80 1027 103 1025 L112 1025 L112 1080 Z" fill="#8e9095"/>
<path d="M70 1080 L72.7 1036 Q76 1031 82 1029 L80 1080 Z" fill="#a3a5aa"/>
<path d="M103 1080 L103.3 1019 Q110 1012 136 1005 L175 1004 Q230 1012 244 1036 L252 1080 Z" fill="#131315"/>
<path d="M112 1006 Q126 994 142 995 Q150 1006 160 1013 L172 1012 L168 1024 Q150 1032 134 1030 Q118 1020 112 1006 Z" fill="#28313f"/>
<path d="M142 992 L168 996 L170 1010 Q162 1016 156 1014 Q148 1006 142 998 Z" fill="#c3aba7"/>
<path d="M140.4 943.6 Q146 912 164.7 904.5 Q185.6 896 205 906 Q223 917 229 943.6 Q230 958 219 971 L214 955 Q214 939 200 925 Q182 916 168 920 Q159 929 158 944 L151 952 L150 975 L139 978 Q135 960 140.4 943.6 Z" fill="url(#hair)"/>
<path d="M141.5 950 Q146 943 151 946 L152 970 Q148 974 143 968 Q140 960 141.5 950 Z" fill="#c9aeaa"/>
<path d="M157 945 Q158 926 168.2 919.5 Q183 914 200 923 Q215 936 219 953 Q219 975 215 985 Q208 1002 195 1006 Q185.6 1009 175 1005 Q160 999 156 990 Q149 980 149 968 Q151 952 157 945 Z" fill="url(#face)"/>
<path d="M191 963 Q195 975 201 981 Q195 985 188 982" fill="none" stroke="#a88a86" stroke-width="2" opacity="0.7"/>
<path d="M167 949 Q180 943 193 948" stroke="#5e4e4a" stroke-width="2.8" fill="none"/>
<path d="M202 952 Q210 948.5 218 951.5" stroke="#5e4e4a" stroke-width="2.6" fill="none"/>
<path d="M173 959.5 Q181 951 190 957.5 Q182 966 173 959.5 Z" fill="#f8f6fa"/><circle cx="183.5" cy="958.5" r="3.2" fill="#262224"/>
<path d="M201 963.5 Q208.5 956 216 961 Q209 968.5 201 963.5 Z" fill="#f8f6fa"/><circle cx="209.5" cy="962" r="2.9" fill="#262224"/>
<path d="M177 991 Q188 985.5 200 989.5 Q191 998 177 991 Z" fill="#7e4e54"/>
<path d="M179.5 990 Q188 987.5 197.5 989.5" stroke="#e4d2d4" stroke-width="1.6" fill="none"/>
<ellipse cx="194.5" cy="1046" rx="42" ry="38.5" fill="#26262a"/>
<ellipse cx="194.5" cy="1047" rx="39.5" ry="36" fill="#111113"/>
<path d="M170 1039 Q200 1034 266 1056 L266 1080 L162 1080 Q158 1050 170 1039 Z" fill="#1c1c20"/>
<rect x="214" y="1048" width="3" height="32" fill="#2a2a2f"/>
</g>
</svg>
</body></html>
